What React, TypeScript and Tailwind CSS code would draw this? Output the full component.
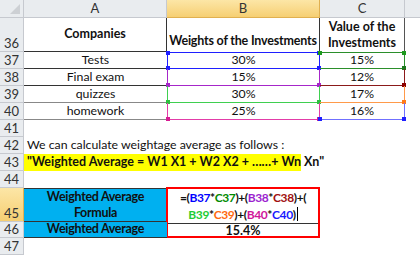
import React from 'react';

const font = { fontFamily: 'Lato, "Liberation Sans", sans-serif' };

type Range = {
  text: string;
  line: string; // border classes
  handles: string[]; // handle classes
};

// highlighted reference cells B37:B40 and C37:C40
const colB: Range[] = [
  { text: '30%', line: 'border-t border-b border-l border-r border-[#1f1fff]', handles: ['-top-[2px] -left-[2px] bg-[#1f1fff]', '-bottom-[2px] -left-[2px] bg-[#1f1fff]', '-top-[2px] -right-[2px] bg-[#1f1fff]', '-bottom-[2px] -right-[2px] bg-[#1f1fff]'] },
  { text: '15%', line: 'border-b border-l border-r border-[#a626c9]', handles: ['-bottom-[2px] -left-[2px] bg-[#a626c9]', '-bottom-[2px] -right-[2px] bg-[#a626c9]'] },
  { text: '30%', line: 'border-b border-l border-r border-[#3fcf50]', handles: ['-bottom-[2px] -left-[2px] bg-[#2fbf40]', '-bottom-[2px] -right-[2px] bg-[#2fbf40]'] },
  { text: '25%', line: 'border-b border-l border-r border-[#e33ca8]', handles: ['-bottom-[2px] -left-[2px] bg-[#d81b93]', '-bottom-[2px] -right-[2px] bg-[#d81b93]'] },
];

const colC: Range[] = [
  { text: '15%', line: 'border-t border-b border-r border-[#2b8f2b]', handles: ['-top-[2px] -left-[2px] bg-[#1d9a1d]', '-top-[2px] -right-[2px] bg-[#1d9a1d]', '-bottom-[2px] -right-[2px] bg-[#1d7a1d]'] },
  { text: '12%', line: 'border-b border-r border-[#8b1a1a]', handles: ['-bottom-[2px] -right-[2px] bg-[#8b0000]'] },
  { text: '17%', line: 'border-b border-r border-[#ff9a4a]', handles: ['-bottom-[2px] -right-[2px] bg-[#ff7a1a]'] },
  { text: '16%', line: 'border-b border-r border-[#7070ff]', handles: ['-bottom-[2px] -left-[2px] bg-[#1f1fff]', '-bottom-[2px] -right-[2px] bg-[#1f1fff]'] },
];

const companies = ['Tests', 'Final exam', 'quizzes', 'homework'];

function RowHead({ n, active }: { n: number; active?: boolean }) {
  return (
    <div
      className={
        'flex items-end justify-center border-b border-r border-[#c6c9cf] text-[13px] leading-[16px] text-[#333] ' +
        (active ? 'bg-gradient-to-b from-[#fce6a6] to-[#f6cf72] border-r-[#e0b050]' : 'bg-[#e9ecef]')
      }
    >
      {n}
    </div>
  );
}

function Cell({ r }: { r: Range }) {
  return (
    <div className={'relative flex items-center justify-center ' + r.line}>
      {r.text}
      {r.handles.map((h, i) => (
        <span key={i} className={'absolute h-[4px] w-[4px] ' + h} />
      ))}
    </div>
  );
}

function Formula() {
  return (
    <span className="whitespace-nowrap text-[12px] font-bold tracking-[-0.4px]">
      <span>=(</span>
      <span className="text-[#0000ff]">B37</span>*<span className="text-[#008a00]">C37</span>)+(
      <span className="text-[#9b1fcf]">B38</span>*<span className="text-[#a01010]">C38</span>)+(
      <br />
      <span className="text-[#22cc33]">B39</span>*<span className="text-[#ff6a10]">C39</span>)+(
      <span className="text-[#d0169a]">B40</span>*<span className="text-[#1a1aff]">C40</span>)
      <span className="ml-px inline-block h-[14px] w-px translate-y-[2px] bg-black" />
    </span>
  );
}

export default function App() {
  return (
    <div className="h-[255px] w-[420px] overflow-hidden bg-white text-[12.3px] text-[#111]" style={font}>
      <div className="grid grid-cols-[24px_143px_153px_85px_15px] grid-rows-[18px_34px_17px_17px_17px_17px_17px_17px_17px_17px_34px_16px_17px]">
        {/* column headers */}
        <div className="relative border-b border-r border-[#c6c9cf] bg-[#e9ecef]">
          <span className="absolute bottom-[3px] right-[3px] h-0 w-0 border-l-[10px] border-t-[10px] border-l-transparent border-t-transparent border-b-[10px] border-b-[#cdd0d4]" />
        </div>
        <div className="flex items-center justify-center border-b border-r border-[#c6c9cf] bg-[#e9ecef] text-[13px] text-[#333]">A</div>
        <div className="flex items-center justify-center border-b border-r border-[#e0b050] bg-gradient-to-b from-[#fce6a6] to-[#f6cf72] text-[13px] text-[#333]">B</div>
        <div className="flex items-center justify-center border-b border-r border-[#c6c9cf] bg-[#e9ecef] text-[13px] text-[#333]">C</div>
        <div className="border-b border-[#c6c9cf] bg-[#e9ecef]" />

        {/* row 36 */}
        <RowHead n={36} />
        <div className="flex items-center justify-center border-b border-r border-[#333] text-[12.5px] font-bold">Companies</div>
        <div className="flex items-end justify-center whitespace-nowrap border-r border-[#333] pb-px text-[12.5px] font-bold tracking-[-0.2px]">Weights of the Investments</div>
        <div className="flex items-end justify-center border-r border-[#555] pb-px text-center text-[12.5px] font-bold leading-[16px]">
          Value of the
          <br />
          Investments
        </div>
        <div />

        {companies.map((c, i) => (
          <React.Fragment key={c}>
            <RowHead n={37 + i} />
            <div className={'flex items-center justify-center border-b ' + (i < 2 ? 'border-[#333]' : 'border-[#888]')}>{c}</div>
            <Cell r={colB[i]} />
            <Cell r={colC[i]} />
            <div />
          </React.Fragment>
        ))}

        {/* row 41 */}
        <RowHead n={41} />
        <div className="col-span-4" />

        {/* row 42 */}
        <RowHead n={42} />
        <div className="col-span-4 flex items-center whitespace-nowrap pl-[3px]">We can calculate weightage average as follows :</div>

        {/* row 43 */}
        <RowHead n={43} />
        <div className="col-span-4 flex items-center">
          <span className="flex h-full w-[277px] items-center whitespace-nowrap bg-[#ffff00] pl-[3px] text-[12.5px] font-bold">
            "Weighted Average = W1 X1 + W2 X2 + ……+ Wn Xn"
          </span>
        </div>

        {/* row 44 */}
        <RowHead n={44} />
        <div className="col-span-4" />

        {/* row 45-46 */}
        <RowHead n={45} active />
        <div className="flex flex-col items-center justify-center border-t border-b border-[#333] bg-[#00b0f0] text-[12.5px] font-bold leading-[16px] tracking-[-0.3px]">
          <span>Weighted Average</span>
          <span>Formula</span>
        </div>
        <div className="row-span-2 -ml-px -mt-px grid grid-rows-[34px_16px] border-2 border-[#ff0000] bg-white">
          <div className="flex items-center justify-center text-center leading-[15px]">
            <Formula />
          </div>
          <div className="flex items-center justify-center border-t border-[#333] text-[12.5px] font-bold">15.4%</div>
        </div>
        <div className="col-span-2" />

        <RowHead n={46} />
        <div className="flex items-center justify-center border-b border-[#333] bg-[#00b0f0] text-[12.5px] font-bold tracking-[-0.3px]">Weighted Average</div>
        <div className="col-span-2" />

        {/* row 47 */}
        <RowHead n={47} />
        <div className="col-span-4" />
      </div>
    </div>
  );
}
